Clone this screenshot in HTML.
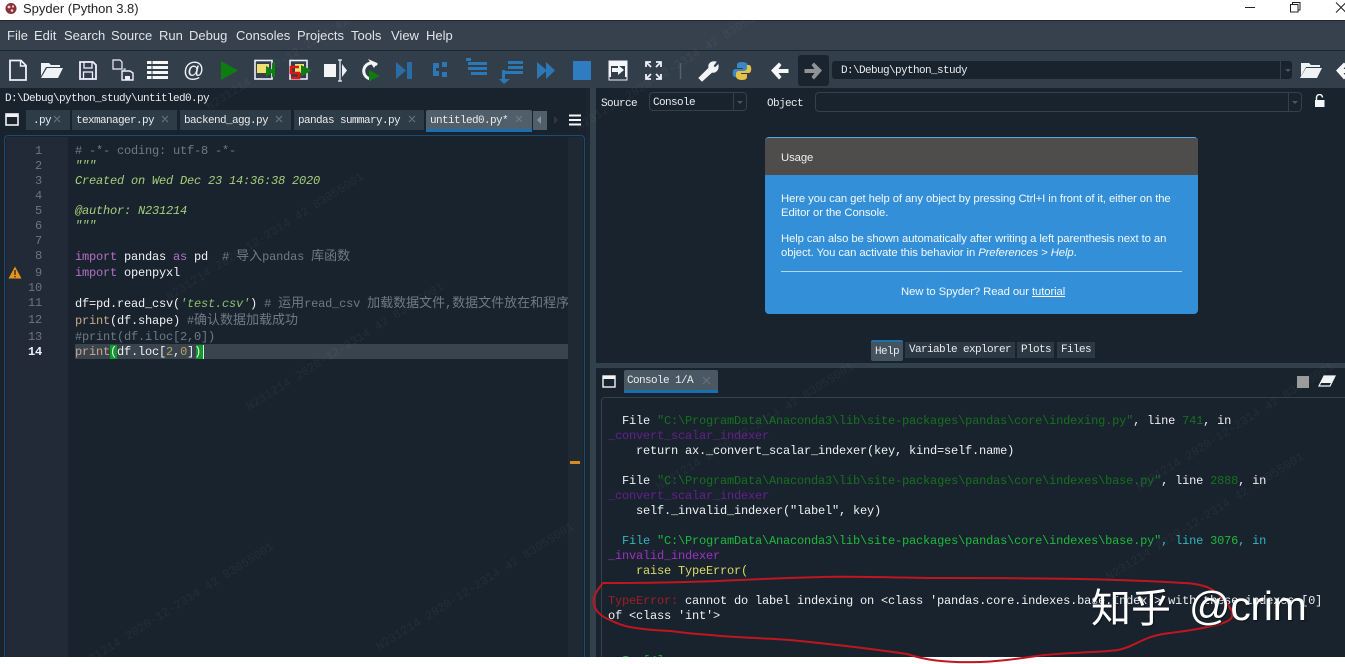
<!DOCTYPE html>
<html><head><meta charset="utf-8"><style>
html,body{margin:0;padding:0;background:#fff}
#p{position:relative;width:1345px;height:664px;overflow:hidden;background:#19232d;font-family:"Liberation Mono","Noto Sans CJK SC",monospace}
#p div,#p span.a,#p svg{position:absolute}
.t{white-space:pre;font-family:"Liberation Mono","Noto Sans CJK SC",monospace;font-size:12px;letter-spacing:-.2px;line-height:15px;height:15px}
.j{font-size:13px;letter-spacing:0}
.s{white-space:pre;font-family:"Liberation Mono","Noto Serif CJK SC",monospace;font-size:11px;letter-spacing:-.6px;line-height:14px;color:#e8ecef}
.n{color:#6b7682;width:30px;text-align:right;left:12px}
.c{color:#6f7a84}.k{color:#b56fc4}.w{color:#eef1f3}.d{color:#a5cf7c;font-style:italic}.f{color:#c9a98a}.g{color:#8cc06e;font-style:italic}.o{color:#b7a166}
.m{font:13px/16px "Liberation Sans",sans-serif;color:#dfe4e8;top:28px;white-space:pre}
.tab{background:#2e3c47;top:110px;height:20px}
.u{font:11.3px/14px "Liberation Sans",sans-serif;letter-spacing:-.09px;color:#f2f8fc;white-space:pre;left:781px}
.dg{color:#15701f}.dp{color:#651f8f}.wm{font:12px "Liberation Mono",monospace;color:#fff;opacity:.045;transform:rotate(-32deg);white-space:pre}
</style></head><body><div id="p">

<!-- title bar -->
<div style="left:0;top:0;width:1345px;height:20px;background:#fff"></div>
<svg style="left:4px;top:2px" width="14" height="13" viewBox="0 0 14 13"><circle cx="7" cy="6.500" r="5.500" fill="#8c2f35"/><circle cx="5" cy="5" r="1.400" fill="#e8d5d5"/><circle cx="9" cy="4.500" r="1.100" fill="#e8d5d5"/><circle cx="8" cy="8.500" r="1.300" fill="#e8d5d5"/></svg>
<div style="left:23px;top:1px;font:13px/16px 'Liberation Sans',sans-serif;color:#222;white-space:pre">Spyder (Python 3.8)</div>
<div style="left:1245px;top:7px;width:10px;height:1px;background:#222"></div>
<svg style="left:1289px;top:1px" width="13" height="13" viewBox="0 0 13 13" fill="none" stroke="#222"><rect x="1.500" y="3.500" width="7.500" height="7.500"/><path d="M3.500 3.500V1.500H11V9H9"/></svg>
<svg style="left:1335px;top:2px" width="10" height="11" viewBox="0 0 10 11" stroke="#222" fill="none"><path d="M1 .5L11 10.500M11 .5L1 10.500"/></svg>

<!-- menu -->
<div style="left:0;top:20px;width:1345px;height:31px;background:#37414d;border-top:1px solid #1d2832;border-bottom:1px solid #1b2630;box-sizing:border-box"></div>
<div class="m" style="left:7px">File</div><div class="m" style="left:34px">Edit</div><div class="m" style="left:64px">Search</div><div class="m" style="left:111px">Source</div><div class="m" style="left:159px">Run</div><div class="m" style="left:189px">Debug</div><div class="m" style="left:236px">Consoles</div><div class="m" style="left:297px">Projects</div><div class="m" style="left:351px">Tools</div><div class="m" style="left:391px">View</div><div class="m" style="left:426px">Help</div>

<!-- toolbar -->
<div style="left:0;top:51px;width:1345px;height:37px;background:#333e4b"></div>
<svg style="left:0;top:51px" width="1345" height="37" viewBox="0 51 1345 37" fill="none">
<path d="M10 60.500H21L26 65.500V80H10Z" stroke="#eef" stroke-width="1.800"/><path d="M20.500 60.500V66H26" stroke="#eef" stroke-width="1.400"/>
<path d="M41 63h8l2 2h9v2H46l-5 9Z" fill="#f0f3f5"/><path d="M47 68h16l-5 10H41Z" fill="#f0f3f5"/>
<path d="M80 62h13l3 3v14H80Z" stroke="#eef" stroke-width="1.800"/><rect x="84" y="62" width="8" height="6" stroke="#eef" stroke-width="1.300"/><rect x="83.500" y="72" width="9" height="7" stroke="#eef" stroke-width="1.300"/>
<path d="M113 60h7l2 2v7h-9Z" stroke="#eef" stroke-width="1.200"/><path d="M122 71h8l3 2v7h-11Z" stroke="#eef" stroke-width="1.400"/><rect x="125" y="76" width="5" height="4" fill="#eef"/><path d="M124 71v-2h2" stroke="#eef"/>
<path d="M147 61h21v3h-21ZM147 66h21v3h-21ZM147 71h21v3h-21ZM147 76h21v3h-21Z" fill="#f4f6f8"/><path d="M152 61v18" stroke="#333e4b"/>
<text x="183" y="77" font-family="Liberation Sans" font-size="21" fill="#eef1f4">@</text>
<path d="M221 61L238 70.500L221 80Z" fill="#0e7d10"/>
<rect x="255" y="60.500" width="17" height="18.500" stroke="#eef" stroke-width="1.600"/><rect x="257" y="64" width="12" height="9" fill="#f0e070"/><path d="M266 66l9 5-9 6Z" fill="#0e7d10"/><rect x="272" y="63" width="3" height="14" fill="#0e7d10"/>
<rect x="290" y="60.500" width="17" height="18.500" stroke="#eef" stroke-width="1.600"/><rect x="295" y="64" width="9" height="9" fill="#f0e070"/><path d="M301 65l11 5.500-11 6Z" fill="#0e7d10"/><path d="M299 67h-8v6h8v5h-8" stroke="#e01515" stroke-width="2.600"/>
<path d="M324 64h12v13h-12Z" fill="#f2f4f6"/><path d="M338 60h4M338 81h4M340 60v21" stroke="#eef" stroke-width="1.300"/><path d="M342 64l5 6.500-5 6.500Z" fill="#eef"/>
<path d="M377 65a8 8 0 1 0-6 14" stroke="#f2f4f6" stroke-width="3"/><path d="M368 59l9 4-3 5" fill="#f2f4f6"/><path d="M369 70l11 6-11 5Z" fill="#0e7d10"/>
<path d="M396 62l10 8.500-10 8.500Z" fill="#2a6da6"/><rect x="407" y="62" width="5" height="17" fill="#2a6da6"/>
<path d="M433 63h6v5h-3v3h3v5h-6ZM442 62h5v5h-5ZM442 72h5v5h-5Z" fill="#2b78b4"/>
<path d="M466 58h5v3h-5ZM468 62h19v3h-19ZM468 67h19v3h-19ZM471 72h16v3h-16Z" fill="#2b78b4"/>
<path d="M507 62h15v3h-15ZM507 67h15v3h-15ZM503 72h19v3h-19ZM501 71h3v9h5l-6 5-5-5h3Z" fill="#2b78b4" transform="translate(1,-1)"/>
<path d="M537 62l10 8.500-10 8.500ZM546 62l9 8.500-9 8.500Z" fill="#2b78b4"/>
<rect x="573" y="61" width="18" height="19" fill="#2f7dc0"/>
<rect x="609" y="61" width="18" height="16" fill="#f4f6f8"/><rect x="611" y="66" width="14" height="11" fill="#333e4b"/><path d="M612 68h6v-3l6 5-6 5v-3h-6Z" fill="#f4f6f8"/><path d="M609 61h18v19h-18Z" stroke="#eef" stroke-width="1"/>
<path d="M646 67v-5h5M661 67v-5h-5M646 74v5h5M661 74v5h-5M647 63l4 4M660 63l-4 4M647 78l4-4M660 78l-4-4" stroke="#eef" stroke-width="1.800"/>
<path d="M680.500 63v16" stroke="#55606c" stroke-width="1.500"/>
<path d="M699 78l10-10c-1-4 2-7 7-6l-3 4 2 2 3-3c1 5-3 8-6 7l-10 9Z" fill="#f2f4f6" stroke="#f2f4f6"/>
<path d="M742 61c-5 0-5 2-5 4v2h6v1h-8c-3 0-3 8 0 8h2v-3c0-2 2-3 4-3h4c2 0 3-1 3-3v-2c0-3-3-4-6-4Z" fill="#3d86c4" transform="translate(0,1)"/><path d="M742 80c5 0 5-2 5-4v-2h-6v-1h8c3 0 3-8 0-8h-2v3c0 2-2 3-4 3h-4c-2 0-3 1-3 3v2c0 3 3 4 6 4Z" fill="#e3c24a"/>
<path d="M771 70.500l8-8 2.500 2.500-3 4h10v4h-10l3 4-2.500 2.500Z" fill="#f6f8f9"/>
<rect x="798" y="55" width="31" height="31" rx="3" fill="#1a242e"/>
<path d="M822 70.500l-8-8-2.500 2.500 3 4h-10v4h10l-3 4 2.500 2.500Z" fill="#8f9395"/>
<path d="M1301 63h8l2 2h9v2h-14l-5 9Z" fill="#f0f3f5"/><path d="M1306 68h16l-5 10h-17Z" fill="#f0f3f5"/>
<path d="M1336 70.500l8-8 2.500 2.500-3 4h10v4h-10l3 4-2.500 2.500Z" fill="#f6f8f9"/>
</svg>
<div style="left:832px;top:61px;width:460px;height:18px;background:#19232d;border-radius:3px"></div>
<div style="left:1280px;top:61px;width:1px;height:18px;background:#32414b"></div>
<div style="left:1285px;top:69px;width:0;height:0;border:3px solid transparent;border-top:3px solid #4a5560"></div>
<div class="s" style="left:841px;top:64px">D:\Debug\python_study</div>

<!-- left pane header -->
<div style="left:0;top:88px;width:590px;height:576px;background:#19232d"></div>
<div class="s" style="left:5px;top:92px">D:\Debug\python_study\untitled0.py</div>
<svg style="left:5px;top:113px" width="15" height="14" viewBox="0 0 15 14"><rect x="1" y="1" width="12" height="11" fill="none" stroke="#f0f2f4" stroke-width="1.600"/><rect x="1" y="1" width="12" height="3" fill="#f0f2f4"/></svg>
<div class="tab" style="left:26px;width:44px"></div><div class="tab" style="left:72px;width:105px"></div><div class="tab" style="left:180px;width:111px"></div><div class="tab" style="left:294px;width:130px"></div>
<div class="tab" style="left:426px;width:106px;background:#505f69;border-bottom:3px solid #1a6fb0;height:19px;border-radius:2px 2px 0 0"></div>
<div class="s" style="left:33px;top:114px">.py</div><div class="s" style="left:76px;top:114px">texmanager.py</div><div class="s" style="left:184px;top:114px">backend_agg.py</div><div class="s" style="left:298px;top:114px">pandas summary.py</div><div class="s" style="left:430px;top:114px">untitled0.py*</div>
<svg style="left:0;top:110px" width="590" height="22" fill="none" stroke="#66717c" stroke-width="1.200"><path d="M54 6l6 6M60 6l-6 6M162 6l6 6M168 6l-6 6M276 6l6 6M282 6l-6 6M409 6l6 6M415 6l-6 6"/><path d="M516 6l6 6M522 6l-6 6" stroke="#6d7a85"/><rect x="533" y="1" width="14" height="19" fill="#505f69" stroke="none"/><path d="M541 6l-4 4 4 4Z" fill="#8a949c" stroke="none"/><path d="M554 6l4 4-4 4Z" fill="#2c3843" stroke="none"/><path d="M569 5.500h12M569 10h12M569 14.500h12" stroke="#f4f6f8" stroke-width="2"/></svg>

<!-- editor -->
<div style="left:4px;top:135px;width:581px;height:530px;border:1px solid #1d4a6e;border-radius:4px;box-sizing:border-box;background:#19232d"></div>
<div style="left:6px;top:137px;width:62px;height:525px;background:#212a36"></div>
<div style="left:568px;top:137px;width:15px;height:525px;background:#1f2934"></div>
<div style="left:586px;top:88px;width:4px;height:576px;background:#1b2630"></div>
<div style="left:570px;top:461px;width:10px;height:3px;background:#d98a1e"></div>
<div style="left:75px;top:344px;width:493px;height:15px;background:#39444e"></div>

<div class="t n" style="top:144px">1</div><div class="t n" style="top:159px">2</div><div class="t n" style="top:174px">3</div><div class="t n" style="top:189px">4</div><div class="t n" style="top:204px">5</div><div class="t n" style="top:219px">6</div><div class="t n" style="top:234px">7</div><div class="t n" style="top:249px">8</div><div class="t n" style="top:266px">9</div><div class="t n" style="top:281px">10</div><div class="t n" style="top:296px">11</div><div class="t n" style="top:313px">12</div><div class="t n" style="top:330px">13</div><div class="t n" style="top:345px;color:#eef;font-weight:bold">14</div>
<svg style="left:8px;top:266px" width="14" height="13" viewBox="0 0 14 13"><path d="M7 .5L13.500 12.500H.5Z" fill="#e6951e"/><path d="M6.300 4h1.400v5H6.300ZM6.300 10h1.400v1.400H6.300Z" fill="#3a2a10"/></svg>

<div class="t c" style="left:75px;top:144px"># -*- coding: utf-8 -*-</div>
<div class="t d" style="left:75px;top:159px">"""</div>
<div class="t d" style="left:75px;top:174px">Created on Wed Dec 23 14:36:38 2020</div>
<div class="t d" style="left:75px;top:204px">@author: N231214</div>
<div class="t d" style="left:75px;top:219px">"""</div>
<div class="t" style="left:75px;top:249px"><span class="k">import</span><span class="w"> pandas </span><span class="k">as</span><span class="w"> pd  </span><span class="c"># <span class="j">导入</span>pandas <span class="j">库函数</span></span></div>
<div class="t" style="left:75px;top:266px"><span class="k">import</span><span class="w"> openpyxl</span></div>
<div class="t" style="left:75px;top:296px;width:493px;overflow:hidden"><span class="w">df=pd.read_csv(</span><span class="g">'test.csv'</span><span class="w">) </span><span class="c"># <span class="j">运用</span>read_csv <span class="j">加载数据文件</span>,<span class="j">数据文件放在和程序</span></span></div>
<div class="t" style="left:75px;top:313px"><span class="f">print</span><span class="w">(df.shape) </span><span class="c">#<span class="j">确认数据加载成功</span></span></div>
<div class="t c" style="left:75px;top:330px">#print(df.iloc[2,0])</div>
<div style="left:110px;top:345px;width:7px;height:14px;background:#0c9a28"></div>
<div style="left:196px;top:345px;width:7px;height:14px;background:#0c9a28"></div>
<div style="left:203px;top:345px;width:1px;height:14px;background:#dfe"></div>
<div class="t" style="left:75px;top:345px"><span class="f">print</span><span class="w">(df.loc[</span><span class="o">2</span><span class="w">,</span><span class="o">0</span><span class="w">])</span></div>

<!-- splitter -->
<div style="left:590px;top:88px;width:6px;height:576px;background:#32414b"></div>

<!-- help pane -->
<div style="left:596px;top:88px;width:749px;height:275px;background:#19232d"></div>
<div class="s" style="left:601px;top:97px">Source</div>
<div style="left:649px;top:92px;width:98px;height:19px;border:1px solid #32414b;border-radius:4px;box-sizing:border-box"></div>
<div style="left:733px;top:92px;width:1px;height:19px;background:#32414b"></div>
<div style="left:737px;top:101px;width:0;height:0;border:3px solid transparent;border-top:3px solid #4a5560"></div>
<div class="s" style="left:653px;top:96px">Console</div>
<div class="s" style="left:767px;top:97px">Object</div>
<div style="left:815px;top:92px;width:487px;height:20px;border:1px solid #32414b;border-radius:4px;box-sizing:border-box"></div>
<div style="left:1288px;top:92px;width:1px;height:20px;background:#32414b"></div>
<div style="left:1292px;top:101px;width:0;height:0;border:3px solid transparent;border-top:3px solid #4a5560"></div>
<svg style="left:1314px;top:94px" width="12" height="14" viewBox="0 0 12 14"><rect x="1" y="6" width="9.500" height="7" fill="#f4f6f8"/><path d="M2.500 6V3.500a3 3 0 0 1 6 0" fill="none" stroke="#f4f6f8" stroke-width="1.500"/></svg>

<div style="left:765px;top:137px;width:433px;height:177px;background:#3390d8;border-radius:4px;border-top:1px solid #5aa9de;box-sizing:border-box"></div>
<div style="left:765px;top:138px;width:433px;height:37px;background:#4f4d4b;border-radius:3px 3px 0 0"></div>
<div class="u" style="top:151px;color:#eee">Usage</div>
<div class="u" style="top:192px">Here you can get help of any object by pressing Ctrl+I in front of it, either on the</div>
<div class="u" style="top:206px">Editor or the Console.</div>
<div class="u" style="top:232px">Help can also be shown automatically after writing a left parenthesis next to an</div>
<div class="u" style="top:246px">object. You can activate this behavior in <i>Preferences &gt; Help</i>.</div>
<div style="left:781px;top:271px;width:401px;height:1px;background:#b5d8f0"></div>
<div class="u" style="left:901px;top:285px">New to Spyder? Read our <u>tutorial</u></div>

<div style="left:871px;top:340px;width:32px;height:21px;background:#45535f;border-top:2px solid #1f6fa8;box-sizing:border-box;border-radius:2px"></div>
<div style="left:905px;top:342px;width:110px;height:16px;background:#2c3843"></div>
<div style="left:1017px;top:342px;width:37px;height:16px;background:#2c3843"></div>
<div style="left:1057px;top:342px;width:38px;height:16px;background:#2c3843"></div>
<div class="s" style="left:875px;top:345px">Help</div><div class="s" style="left:909px;top:343px">Variable explorer</div><div class="s" style="left:1021px;top:343px">Plots</div><div class="s" style="left:1061px;top:343px">Files</div>
<div style="left:596px;top:363px;width:749px;height:5px;background:#32414b"></div>

<!-- console -->
<svg style="left:602px;top:375px" width="15" height="13" viewBox="0 0 15 13"><rect x="1" y="1" width="12" height="11" fill="none" stroke="#f0f2f4" stroke-width="1.400"/><rect x="1" y="1" width="12" height="3" fill="#f0f2f4"/></svg>
<div style="left:624px;top:370px;width:94px;height:23px;background:#4a5863;border-bottom:3px solid #1a6fb0;border-radius:2px 2px 0 0;box-sizing:border-box"></div>
<div class="s" style="left:627px;top:374px">Console 1/A</div>
<svg style="left:702px;top:376px" width="9" height="9" stroke="#66717c" stroke-width="1.200"><path d="M1 1l7 7M8 1l-7 7"/></svg>
<div style="left:1297px;top:376px;width:12px;height:12px;background:#9a9a9a"></div>
<svg style="left:1318px;top:375px" width="18" height="13" viewBox="0 0 18 13"><path d="M6 1h11L12 11H1Z" fill="none" stroke="#f2f4f6" stroke-width="1.200"/><path d="M6 1h11L13 8H3Z" fill="#f2f4f6"/></svg>
<div style="left:601px;top:397px;width:760px;height:270px;border:1px solid #32414b;border-radius:4px;box-sizing:border-box"></div>

<div class="t w" style="left:608px;top:414px">  File <span class="dg">"C:\ProgramData\Anaconda3\lib\site-packages\pandas\core\indexing.py"</span>, line <span class="dg">741</span>, in</div>
<div class="t dp" style="left:608px;top:429px">_convert_scalar_indexer</div>
<div class="t w" style="left:608px;top:444px">    return ax._convert_scalar_indexer(key, kind=self.name)</div>
<div class="t w" style="left:608px;top:474px">  File <span class="dg">"C:\ProgramData\Anaconda3\lib\site-packages\pandas\core\indexes\base.py"</span>, line <span class="dg">2888</span>, in</div>
<div class="t dp" style="left:608px;top:489px">_convert_scalar_indexer</div>
<div class="t w" style="left:608px;top:504px">    self._invalid_indexer("label", key)</div>
<div class="t" style="left:608px;top:534px;color:#35b4bd">  File <span style="color:#1fb83c">"C:\ProgramData\Anaconda3\lib\site-packages\pandas\core\indexes\base.py"</span>, line <span style="color:#1fb83c">3076</span>, in</div>
<div class="t" style="left:608px;top:549px;color:#a02fc8">_invalid_indexer</div>
<div class="t" style="left:608px;top:564px;color:#d9d96a">    raise TypeError(</div>
<div class="t w" style="left:608px;top:594px"><span style="color:#9c1f24">TypeError:</span> cannot do label indexing on &lt;class 'pandas.core.indexes.base.Index'&gt; with these indexes [0]</div>
<div class="t w" style="left:608px;top:609px">of &lt;class 'int'&gt;</div>
<div class="t" style="left:622px;top:654px;color:#1fa83a">In [4]:</div>

<!-- faint watermarks -->
<div class="wm" style="left:190px;top:40px">N231214 2020-12-2314 42 83055001</div>
<div class="wm" style="left:560px;top:60px">N231214 2020-12-2314 42 83055001</div>
<div class="wm" style="left:150px;top:230px">N231214 2020-12-2314 42 83055001</div>
<div class="wm" style="left:230px;top:340px">N231214 2020-12-2314 42 83055001</div>
<div class="wm" style="left:60px;top:600px">N231214 2020-12-2314 42 83055001</div>
<div class="wm" style="left:360px;top:580px">N231214 2020-12-2314 42 83055001</div>
<div class="wm" style="left:640px;top:420px">N231214 2020-12-2314 42 83055001</div>
<div class="wm" style="left:1120px;top:420px">N231214 2020-12-2314 42 83055001</div>
<div class="wm" style="left:1090px;top:510px">N231214 2020-12-2314 42 83055001</div>

<!-- white bottom -->
<div style="left:0;top:657px;width:1345px;height:7px;background:#fff"></div>

<!-- red ellipse -->
<svg style="left:0;top:0" width="1345" height="664" fill="none"><path d="M603 583C597 590 592 598 594 604C595 610 600 616 610 620C618 624 624 626 630 627C645 630 655 630 670 631C685 633 695 634 710 635C740 638 765 638 790 640C840 645 880 650 907 654C925 660 945 663 980 662C1010 661 1025 657 1045 655C1080 652 1105 652 1118 650C1135 647 1142 636 1170 633C1185 631 1195 630 1207 627C1218 625 1230 622 1232 617C1233 612 1232 610 1230 608C1224 598 1215 590 1207 587C1198 584 1190 583 1183 583C1120 579 1050 578 945 578C900 578 860 576 823 577C780 578 760 579 740 580C700 582 640 583 603 583Z" stroke="#c0161f" stroke-width="2"/></svg>

<!-- zhihu mark -->
<div style="left:1091px;top:577px;font:40px/56px 'Noto Sans CJK SC',sans-serif;color:#fff;white-space:pre;text-shadow:1px 1px 1px rgba(0,0,0,.5)">知乎</div>
<div style="left:1189px;top:578px;font:41px/56px 'Liberation Sans',sans-serif;letter-spacing:-.3px;color:#fff;white-space:pre;text-shadow:1px 1px 1px rgba(0,0,0,.5)">@crim</div>

</div></body></html>
